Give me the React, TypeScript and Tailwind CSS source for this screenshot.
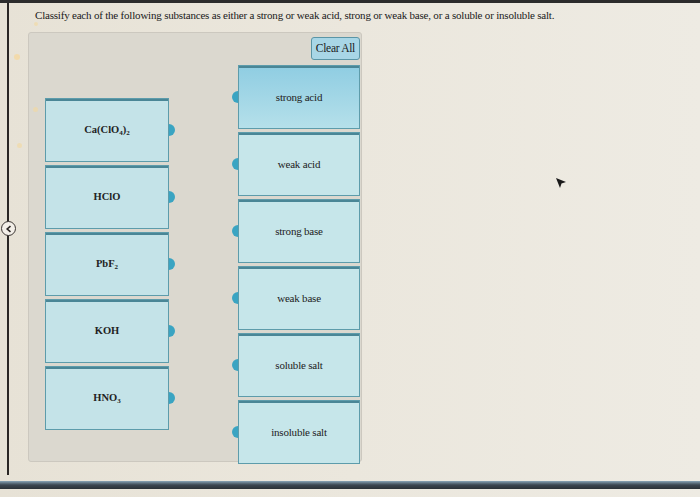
const substances = [
  { key: 'caclo4', label: (<>Ca(ClO<sub className="text-[7px]">4</sub>)<sub className="text-[7px]">2</sub></>) },
  { key: 'hclo', label: <>HClO</> },
  { key: 'pbf2', label: (<>PbF<sub className="text-[7px]">2</sub></>) },
  { key: 'koh', label: <>KOH</> },
  { key: 'hno3', label: (<>HNO<sub className="text-[7px]">3</sub></>) },
]

const bins = ['strong acid', 'weak acid', 'strong base', 'weak base', 'soluble salt', 'insoluble salt']

const serif = { fontFamily: '"Liberation Serif", "Times New Roman", serif' }

function Tab({ side }: { side: 'left' | 'right' }) {
  return side === 'right' ? (
    <span className="absolute -right-[7px] top-1/2 -translate-y-1/2 w-[6px] h-[12px] rounded-r-full bg-[#3aa4c2]" />
  ) : (
    <span className="absolute -left-[7px] top-1/2 -translate-y-1/2 w-[6px] h-[12px] rounded-l-full bg-[#3aa4c2]" />
  )
}

export default function App() {
  return (
    <div
      className="relative w-[700px] h-[497px] overflow-hidden bg-gradient-to-r from-[#e7e2d6] via-[#ebe7dd] to-[#eeebe3] text-[#1c1c1c]"
      style={serif}
    >
      <div className="h-[3px] bg-[#2c2c2c]" />

      <div className="flex h-[478px]">
        {/* window edge with the collapse handle */}
        <div className="relative w-[10px] shrink-0">
          <div className="absolute left-[7px] top-0 bottom-[6px] w-[2px] bg-[#2a2624]" />
          <div className="absolute left-[1px] top-[218px] w-[15px] h-[15px] rounded-full border border-[#3a3532] bg-[#f3efe8] flex items-center justify-center">
            <svg width="8" height="8" viewBox="0 0 8 8">
              <path d="M5.5 1.2 L2.2 4 L5.5 6.8" fill="none" stroke="#2a2624" strokeWidth="1.6" />
            </svg>
          </div>
        </div>

        <div className="flex-1 pl-[25px] pt-[5px]">
          <p className="text-[11px] leading-[14px] tracking-[-0.2px] text-[#1a1a1a]">
            Classify each of the following substances as either a strong or weak acid, strong or weak base, or a soluble or insoluble salt.
          </p>

          <div className="mt-[10px] -ml-[7px] w-[334px] h-[430px] rounded-[3px] border border-[#ccc8bf] bg-[#dbd8cf] flex pt-[4px] pr-[1px]">
            {/* draggable substances */}
            <div className="w-[209px] pl-[16px] pt-[61px] flex flex-col gap-[3px]">
              {substances.map((s) => (
                <div
                  key={s.key}
                  className="relative w-[124px] h-[64px] border border-[#5d9cab] shadow-[inset_0_2px_0_#4a8696] bg-[#c4e3e8] flex items-center justify-center text-[10.5px] font-bold text-[#222]"
                >
                  <span>{s.label}</span>
                  <Tab side="right" />
                </div>
              ))}
            </div>

            {/* answer bins */}
            <div className="w-[122px] flex flex-col">
              <div className="flex justify-end">
                <button className="h-[23px] px-[4px] rounded-[3px] border border-[#5a95a6] bg-[#a8d6e6] text-[11.5px] tracking-[-0.3px] text-[#1a1a1a]">
                  Clear All
                </button>
              </div>
              <div className="mt-[5px] flex flex-col gap-[3px]">
                {bins.map((b, i) => (
                  <div
                    key={b}
                    className={`relative h-[64px] border border-[#5d9cab] shadow-[inset_0_2px_0_#4a8696] flex items-center justify-center text-[11px] tracking-[-0.2px] text-[#222] ${
                      i === 0 ? 'bg-gradient-to-b from-[#8fcde2] to-[#b5e0ea]' : 'bg-[#c6e6ea]'
                    }`}
                  >
                    {b}
                    <Tab side="left" />
                  </div>
                ))}
              </div>
            </div>
          </div>
        </div>
      </div>

      {/* screen bezel along the bottom */}
      <div className="h-[8px] bg-gradient-to-b from-[#8aa6b8] via-[#3b4650] to-[#2b3136]" />

      {/* mouse pointer */}
      <svg className="absolute left-[555px] top-[177px]" width="12" height="12" viewBox="0 0 12 12">
        <path d="M1 1 L11 5 L6.5 6.5 L5 11 Z" fill="#1a1a1a" />
      </svg>

      {/* light glints */}
      <span className="absolute left-[14px] top-[54px] w-[6px] h-[6px] rounded-full bg-[#f6d79a]/70" />
      <span className="absolute left-[34px] top-[22px] w-[4px] h-[4px] rounded-full bg-[#f3d89e]/60" />
      <span className="absolute left-[33px] top-[107px] w-[5px] h-[5px] rounded-full bg-[#f3d89e]/60" />
      <span className="absolute left-[17px] top-[143px] w-[5px] h-[5px] rounded-full bg-[#f3d89e]/60" />
    </div>
  )
}
